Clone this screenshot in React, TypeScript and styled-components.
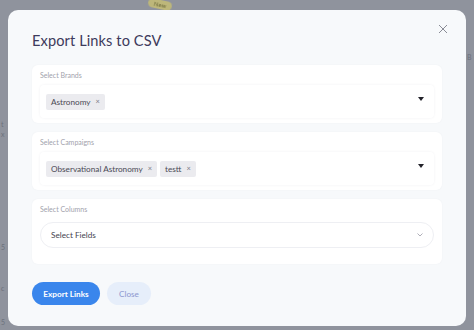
import styled, { createGlobalStyle } from 'styled-components'

const GlobalStyle = createGlobalStyle`
    html, body {
        margin: 0;
        padding: 0;
        background: #8f939d;
        font-family: Lato, "Open Sans", sans-serif;
    }
`

const Backdrop = styled.div`
    position: relative;
    width: 474px;
    height: 330px;
    overflow: hidden;
    padding: 10px 8px 0 8px;
    box-sizing: border-box;
`

// faint page content showing behind the overlay
const Behind = styled.span<{ $x: number; $y: number }>`
    position: absolute;
    left: ${p => p.$x}px;
    top: ${p => p.$y}px;
    font-size: 7px;
    color: #6d717c;
`

const NewBadge = styled.div`
    position: absolute;
    top: 0;
    left: 148px;
    padding: 1px 6px;
    font-size: 6px;
    color: #6b6a3a;
    background: #bdb77a;
    border-radius: 6px;
    transform: rotate(12deg);
    filter: blur(0.4px);
`

const Modal = styled.div`
    background: #f7f9fb;
    border-radius: 10px;
    height: 316px;
    padding: 22px 24px 0 24px;
    box-sizing: border-box;
    display: flex;
    flex-direction: column;
    position: relative;
`

const Header = styled.div`
    display: flex;
    align-items: center;
    justify-content: space-between;
    margin-bottom: 15px;
`

const Title = styled.h2`
    margin: 0;
    font-size: 14.6px;
    font-weight: 400;
    color: #3e3b5c;
    letter-spacing: 0.1px;
    line-height: 18px;
`

const CloseIcon = styled.svg`
    position: absolute;
    top: 14px;
    right: 18px;
`

const Card = styled.div<{ $pad?: number }>`
    background: #ffffff;
    border-radius: 6px;
    padding: 6px 8px ${p => p.$pad ?? 5}px 8px;
    margin-bottom: 9px;
    box-shadow: 0 0 2px rgba(30, 40, 70, 0.04);
`

const Label = styled.div`
    font-size: 7px;
    line-height: 9px;
    color: #a2a2ac;
    margin-bottom: 5px;
`

const TagBox = styled.div`
    display: flex;
    align-items: center;
    gap: 3px;
    height: 33px;
    padding: 0 6px;
    background: #fff;
    border-radius: 4px;
    box-shadow: 0 0 3px rgba(30, 40, 70, 0.06);
    position: relative;
`

const Tag = styled.span`
    display: inline-flex;
    align-items: center;
    gap: 5px;
    height: 16px;
    padding: 0 5px;
    font-size: 8.2px;
    color: #4a4a55;
    background: #ebebef;
    border-radius: 2px;
`

const TagX = styled.span`
    font-size: 7.5px;
    color: #7a7a85;
`

const Caret = styled.span`
    position: absolute;
    right: 10px;
    top: 12px;
    width: 0;
    height: 0;
    border-left: 3px solid transparent;
    border-right: 3px solid transparent;
    border-top: 4px solid #22222a;
`

const FieldSelect = styled.div`
    display: flex;
    align-items: center;
    justify-content: space-between;
    height: 24px;
    margin-top: 8px;
    padding: 0 10px;
    border: 1px solid #eeeff3;
    border-radius: 13px;
    font-size: 8.2px;
    color: #44444e;
`

const Actions = styled.div`
    display: flex;
    gap: 7px;
    margin-top: 9px;
`

const Button = styled.button<{ $primary?: boolean }>`
    height: 23px;
    border: none;
    border-radius: 12px;
    padding: 0;
    font-family: inherit;
    font-size: 8.2px;
    font-weight: ${p => (p.$primary ? 700 : 400)};
    color: ${p => (p.$primary ? '#ffffff' : '#8c97cf')};
    background: ${p => (p.$primary ? '#3a86ec' : '#e6eefa')};
    width: ${p => (p.$primary ? '68px' : '44px')};
`

export default function App() {
    return (
        <>
            <GlobalStyle />
            <Backdrop>
                <Behind $x={1} $y={120}>t</Behind>
                <Behind $x={1} $y={130}>x</Behind>
                <Behind $x={1} $y={243}>5</Behind>
                <Behind $x={1} $y={284}>c</Behind>
                <Behind $x={1} $y={318}>5</Behind>
                <Behind $x={467} $y={53}>B</Behind>
                <NewBadge>New</NewBadge>
                <Modal>
                    <CloseIcon width="10" height="10" viewBox="0 0 10 10">
                        <path d="M1 1L9 9M9 1L1 9" stroke="#8a8c96" strokeWidth="1" />
                    </CloseIcon>
                    <Header>
                        <Title>Export Links to CSV</Title>
                    </Header>

                    <Card>
                        <Label>Select Brands</Label>
                        <TagBox>
                            <Tag>Astronomy <TagX>×</TagX></Tag>
                            <Caret />
                        </TagBox>
                    </Card>

                    <Card>
                        <Label>Select Campaigns</Label>
                        <TagBox>
                            <Tag>Observational Astronomy <TagX>×</TagX></Tag>
                            <Tag>testt <TagX>×</TagX></Tag>
                            <Caret />
                        </TagBox>
                    </Card>

                    <Card $pad={16}>
                        <Label>Select Columns</Label>
                        <FieldSelect>
                            Select Fields
                            <svg width="6" height="4" viewBox="0 0 6 4">
                                <path d="M0.5 0.5L3 3L5.5 0.5" stroke="#9a9aa6" strokeWidth="0.8" fill="none" />
                            </svg>
                        </FieldSelect>
                    </Card>

                    <Actions>
                        <Button $primary>Export Links</Button>
                        <Button>Close</Button>
                    </Actions>
                </Modal>
            </Backdrop>
        </>
    )
}
